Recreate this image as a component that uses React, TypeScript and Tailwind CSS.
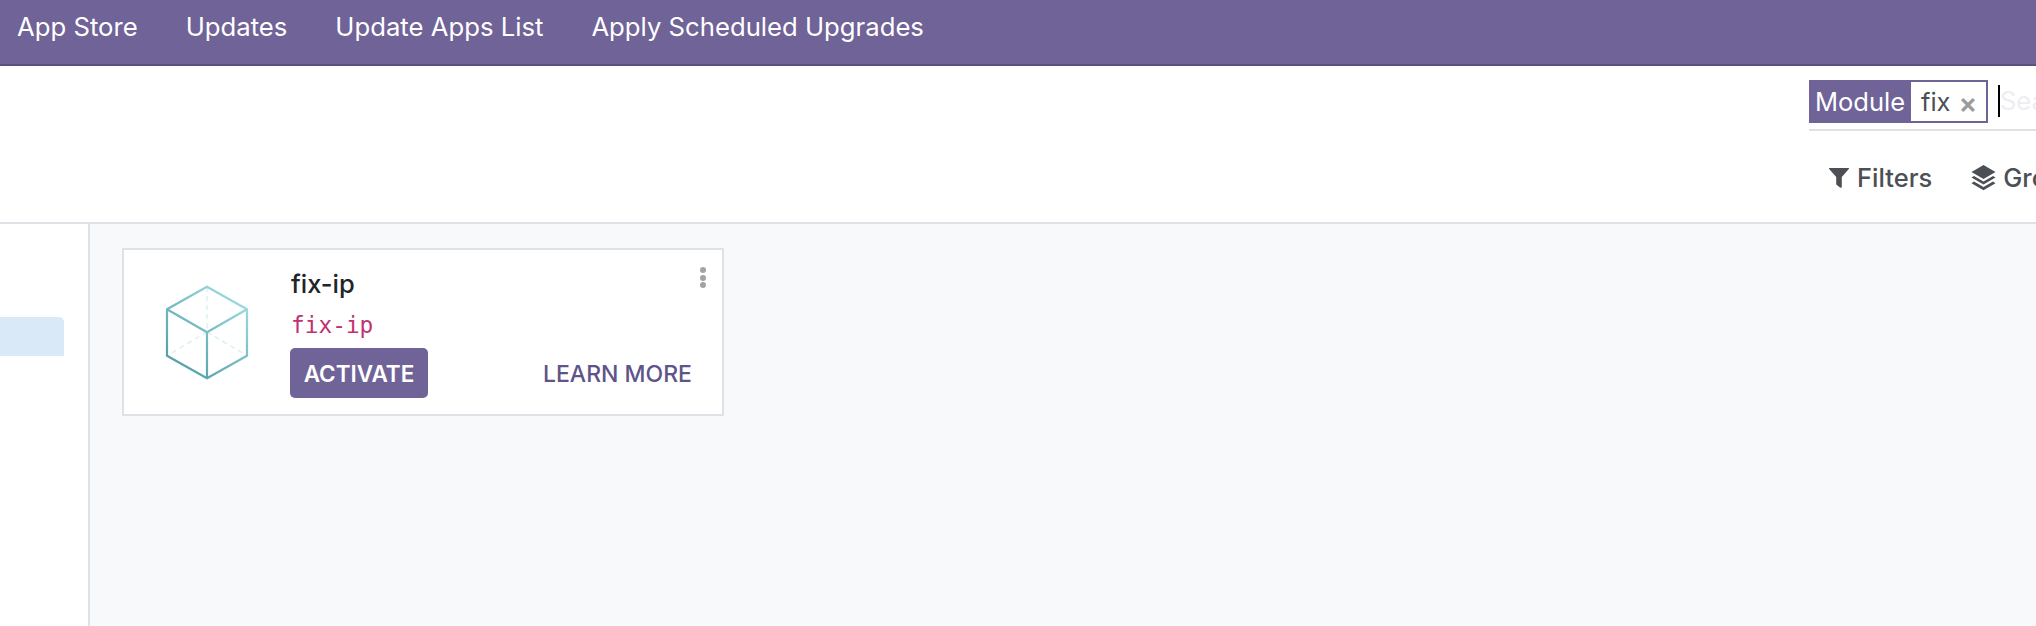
function CubeIcon() {
  return (
    <svg width="90" height="102" viewBox="161 282 90 102" fill="none" className="block">
      <defs>
        <linearGradient id="cube" x1="166" y1="378" x2="246" y2="286" gradientUnits="userSpaceOnUse">
          <stop offset="0" stopColor="#4a959f" />
          <stop offset="1" stopColor="#a5e3e8" />
        </linearGradient>
      </defs>
      <g stroke="#d3eef0" strokeWidth="1.2" strokeDasharray="5 4">
        <path d="M206 287V332" />
        <path d="M206 332L166 355.5" />
        <path d="M206 332L246 355.5" />
      </g>
      <g stroke="url(#cube)" strokeWidth="2.2" strokeLinejoin="round">
        <path d="M206 286.7L246 309.3V355.7L206 378.3L166 355.7V309.3Z" />
        <path d="M166 309.3L206 332.3L246 309.3" />
        <path d="M206 332.3V378.3" />
      </g>
    </svg>
  );
}

function FilterIcon() {
  return (
    <svg width="20" height="20" viewBox="0 0 20 20" fill="#4c4f54" className="shrink-0">
      <path d="M0.5 0H19.5C20 0 20.2 0.6 19.8 1L12.8 9V18.5C12.8 19.6 11.8 20.2 11 19.6L7.8 17C7.4 16.7 7.2 16.3 7.2 15.8V9L0.2 1C-0.2 0.6 0 0 0.5 0Z" />
    </svg>
  );
}

function LayersIcon() {
  return (
    <svg width="25" height="26" viewBox="0 0 25 26" fill="#4c4f54" className="shrink-0">
      <path d="M12.5 0L24.5 7L12.5 14L0.5 7Z" />
      <path d="M3 11L12.5 16.5L22 11L24.5 12.6L12.5 19.6L0.5 12.6Z" />
      <path d="M3 16.6L12.5 22.1L22 16.6L24.5 18.2L12.5 25.2L0.5 18.2Z" />
    </svg>
  );
}

export default function App() {
  const menu = ["App Store", "Updates", "Update Apps List", "Apply Scheduled Upgrades"];

  return (
    <div className="w-[2036px] h-[626px] overflow-hidden flex flex-col bg-white font-['Inter',sans-serif] text-[#4c4c4c]">
      <nav className="h-[66px] shrink-0 flex items-start gap-[48px] pl-[17px] pt-[11px] bg-[#6f6398] border-b-2 border-[#5b5080]">
        {menu.map((item) => (
          <span key={item} className="text-[25.7px] leading-[32px] text-white">
            {item}
          </span>
        ))}
      </nav>

      <div className="h-[158px] shrink-0 flex justify-end border-b-2 border-[#dee2e6]">
        <div className="w-[227px] overflow-hidden pt-[14px]">
          <div className="flex items-start h-[51px] border-b-2 border-[#dee2e6]">
            <div className="flex shrink-0 h-[43px] border-2 border-[#6f6398] text-[25.5px]">
              <span className="flex items-center w-[100px] pl-[4px] pt-[2px] bg-[#6f6398] text-white">Module</span>
              <span className="flex items-center w-[75px] pl-[10px] pt-[2px] text-[#4c4f54]">
                fix
                <span className="ml-[8px] text-[28px] font-semibold text-[#9b9b9b]">×</span>
              </span>
            </div>
            <div className="ml-[10px] mt-[5px] flex items-center h-[32px] border-l-2 border-black text-[25.5px] text-[#eceef2]">
              Search...
            </div>
          </div>
          <div className="flex items-center mt-[31px] pl-[20px] h-[32px] whitespace-nowrap text-[25.5px] font-medium text-[#4c4f54]">
            <FilterIcon />
            <span className="ml-[8px]">Filters</span>
            <span className="ml-[39px] shrink-0">
              <LayersIcon />
            </span>
            <span className="ml-[7px]">Group By</span>
          </div>
        </div>
      </div>

      <div className="flex-1 flex min-h-0">
        <aside className="w-[90px] shrink-0 border-r-2 border-[#dee2e6] bg-white pt-[93px]">
          <div className="w-[64px] h-[39px] bg-[#d9e9f7] rounded-tr-[5px]" />
        </aside>
        <main className="flex-1 bg-[#f8f9fb] pl-[32px] pt-[24px]">
          <div className="relative w-[602px] h-[168px] flex bg-white border-2 border-[#dee2e6]">
            <div className="ml-[38px] mt-[32px]">
              <CubeIcon />
            </div>
            <div className="ml-[39px] w-[401px] flex flex-col">
              <span className="mt-[18px] text-[25.5px] leading-[32px] font-medium text-[#212529]">fix-ip</span>
              <code className="mt-[11px] text-[22.8px] leading-[28px] font-['DejaVu_Sans_Mono',monospace] text-[#c0316f]">
                fix-ip
              </code>
              <div className="mt-[9px] -ml-[1px] flex items-center justify-between">
                <button className="h-[50px] w-[138px] pt-[2px] rounded-[5px] bg-[#6f6398] text-[22.5px] font-semibold text-white">
                  ACTIVATE
                </button>
                <span className="mt-[2px] text-[23px] font-medium text-[#5f5489]">LEARN MORE</span>
              </div>
            </div>
            <div className="absolute top-[17px] right-[16px] flex flex-col gap-[1.5px]">
              <span className="w-[6px] h-[6px] rounded-full bg-[#a3a3a3]" />
              <span className="w-[6px] h-[6px] rounded-full bg-[#a3a3a3]" />
              <span className="w-[6px] h-[6px] rounded-full bg-[#a3a3a3]" />
            </div>
          </div>
        </main>
      </div>
    </div>
  );
}
